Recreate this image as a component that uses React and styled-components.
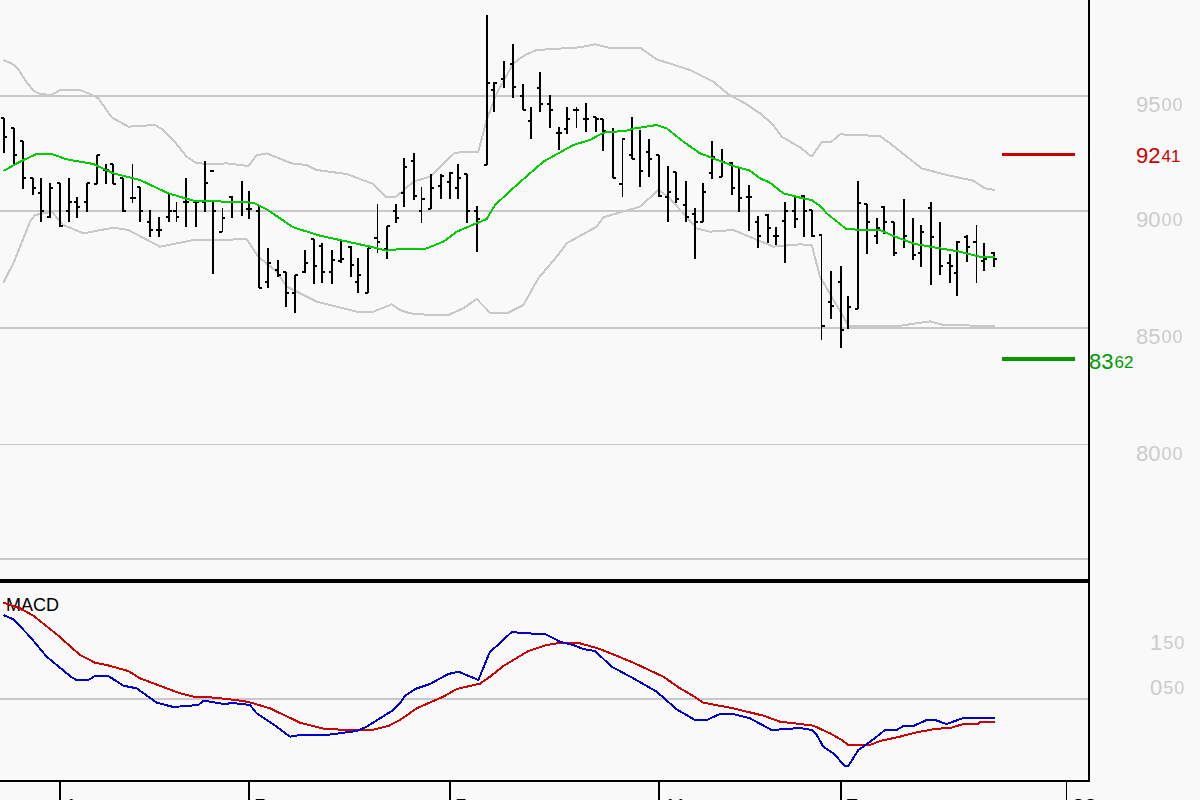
import React from "react";
import styled, { createGlobalStyle } from "styled-components";

// all chart data is in 1/3 px units, svg viewBox scales it down
const shift = (rows, dx, dy = 0) =>
  rows.map(([x, y, ...rest]) => [x + dx, y + dy, ...rest]);

const shiftBars = (rows, dx, dy = 0) =>
  rows.map(([x, hi, lo, op, cl, thin]) => [
    x + dx,
    hi + dy,
    lo + dy,
    op == null ? null : op + dy,
    cl == null ? null : cl + dy,
    thin,
  ]);

const bars = [
  ...shiftBars(
    [
      [12, 355, 458, 355, 412],
      [41, 385, 495, 385, 466],
      [68, 424, 566, 424, 535],
      [100, 535, 585, 535, 565],
      [122, 535, 665, 580, 633],
      [150, 550, 653, 650, 565],
      [180, 550, 680, 550, 677],
      [207, 535, 665, 633, 607],
      [232, 592, 653, 607, 620],
      [261, 550, 635, 607, 550],
      [290, 466, 553, 553, 466],
      [318, 492, 553, 510, 510],
      [340, 492, 553, 492, 553],
      [370, 535, 635, 535, 633],
      [398, 492, 610, 595, 595, true],
      [420, 562, 665, 562, 633],
      [450, 630, 710, 665, 690],
      [477, 650, 710, 690, 690],
      [506, 580, 665, 650, 633],
      [528, 607, 665, 633, 650, true],
      [558, 535, 680, 607, 607],
      [588, 607, 680, 607, 607],
      [615, 482, 635, 607, 550],
      [640, 605, 823, null, 633],
      [667, 625, 697, 695, 655, true],
      [695, 587, 653, 592, null],
      [726, 543, 647, null, 607],
      [747, 573, 658, 628, 628],
      [777, 615, 865, 633, 865],
      [804, 745, 865, 845, 788],
      [834, 780, 830, 810, 825],
      [858, 815, 922, 815, 878],
      [885, 825, 938, 878, 825],
      [915, 750, 818, 815, 788],
      [942, 718, 853, 718, 798],
      [966, 730, 848, 738, 815],
      [996, 750, 853, 815, 780],
      [1023, 722, 790, 783, 778],
      [1052, 738, 830, 740, 795],
      [1074, 775, 880, 845, 826],
      [1103, 745, 880, 878, 745],
      [1132, 612, 760, 715, 725, true],
      [1162, 677, 778, 748, 677],
      [1187, 612, 668, 632, 655],
    ],
    0
  ),
  ...shiftBars(
    [
      [12, 475, 622, 580, 500],
      [41, 460, 600, 482, 588],
      [65, 562, 668, 632, 598, true],
      [93, 523, 628, 628, 563],
      [122, 523, 596, 557, 527],
      [150, 517, 596, 545, 520],
      [174, 493, 598, 563, 535],
      [201, 523, 668, 523, 632],
      [231, 618, 755, 632, 657],
      [261, 45, 495, 495, 248],
      [283, 247, 335, 270, 248],
      [312, 183, 263, 237, null],
      [339, 132, 295, 192, 260],
      [369, 253, 331, 287, 329],
      [393, 322, 416, 363, null],
      [420, 217, 335, 265, 311],
      [450, 286, 383, 311, 329],
      [477, 380, 450, 398, 398],
      [500, 322, 402, 386, 356],
      [528, 322, 383, 330, 330, true],
      [558, 310, 395, 356, 356],
      [588, 350, 395, 352, 356],
      [609, 356, 452, 356, 392],
      [640, 385, 535, null, 535],
      [667, 418, 590, 551, 418, true],
      [696, 350, 478, 466, 478],
      [720, 390, 560, null, 512],
      [747, 418, 532, 455, 476],
      [777, 466, 590, 466, 588],
      [804, 498, 665, 590, 575],
      [828, 517, 610, 517, 598],
      [858, 544, 665, 615, 650],
      [885, 625, 778, 642, 665],
      [909, 550, 667, 667, 575],
      [936, 423, 536, 520, 472],
      [966, 447, 532, 530, 487],
      [996, 487, 585, 490, 563],
      [1018, 500, 635, null, 593],
      [1047, 556, 692, 592, 592],
      [1074, 648, 743, 665, 708],
      [1103, 643, 728, 645, 683],
      [1127, 680, 735, 707, 707],
      [1155, 607, 790, 662, 632],
      [1184, 590, 685, 632, 656],
    ],
    1200
  ),
  ...shiftBars(
    [
      [12, 285, 410, 287, 333],
      [36, 331, 410, 331, 408],
      [65, 406, 720, 406, 678, true],
      [93, 514, 656, 607, 617],
      [122, 498, 743, 545, 690],
      [144, 588, 686, null, 620],
      [174, 243, 628, 626, 308],
      [201, 313, 461, 313, 367],
      [231, 354, 431, 408, 385],
      [253, 318, 402, 320, 367],
      [283, 366, 467, 366, 460],
      [312, 297, 443, 417, 408],
      [339, 354, 480, null, 464],
      [363, 376, 500, 460, 395],
      [393, 307, 554, 325, 412],
      [420, 366, 524, null, 497],
      [450, 462, 548, 490, 497],
      [471, 423, 587, 520, 425],
      [500, 406, 485, 412, 440],
      [529, 375, 548, 425, null, true],
      [552, 430, 512, 482, 476],
      [582, 457, 500, 458, 476],
    ],
    2400,
    300
  ),
];

const upperBand = [
  ...[
    [10, 180], [35, 190], [55, 207], [75, 240], [100, 272], [120, 282], [155, 285],
    [180, 270], [240, 270], [270, 282], [295, 295], [335, 352], [385, 380], [465, 375],
    [490, 390], [520, 420], [560, 470], [590, 490], [650, 492], [680, 490], [745, 498],
    [770, 466], [800, 460], [875, 490], [920, 495], [950, 510], [1040, 522], [1120, 552],
    [1160, 592], [1185, 592],
  ],
  ...shift(
    [
      [0, 580], [40, 545], [90, 530], [125, 495], [165, 458], [235, 455], [260, 360],
      [290, 280], [340, 190], [375, 165], [410, 150], [540, 142], [585, 133], [625, 143],
      [720, 143], [770, 178], [870, 210], [940, 245], [985, 283], [1035, 310], [1080, 340],
      [1115, 370], [1145, 410],
    ],
    1200
  ),
  ...shift(
    [
      [0, 142], [35, 170], [65, 127], [95, 125], [120, 103], [240, 108], [270, 130],
      [320, 170], [365, 205], [440, 225], [520, 242], [555, 265], [585, 270],
    ],
    2400,
    300
  ),
];

const lowerBand = [
  ...[
    [10, 848], [40, 790], [90, 665], [105, 645], [155, 635], [190, 675], [250, 700],
    [340, 683], [385, 690], [480, 740], [580, 720], [740, 718], [775, 770], [830, 815],
    [860, 860], [950, 905], [1070, 935], [1120, 935], [1175, 913],
  ],
  ...shift(
    [
      [0, 930], [30, 940], [90, 945], [145, 945], [190, 925], [230, 897], [270, 938],
      [320, 940], [370, 915], [415, 835], [470, 770], [500, 730], [590, 680], [610, 652],
      [720, 620], [775, 570], [805, 590], [890, 685], [930, 695], [1000, 690], [1120, 740],
    ],
    1200
  ),
  ...shift(
    [
      [0, 433], [35, 435], [60, 530], [130, 650], [145, 678], [295, 678], [390, 664],
      [430, 675], [585, 678],
    ],
    2400,
    300
  ),
];

const average = [
  ...[
    [10, 513], [60, 485], [110, 462], [155, 462], [200, 478], [280, 492], [340, 520],
    [420, 540], [505, 580], [580, 602], [650, 604], [760, 608], [800, 628], [880, 682],
    [960, 707], [1120, 742],
  ],
  ...shift(
    [
      [-40, 752], [0, 747], [75, 747], [130, 725], [170, 695], [260, 657], [285, 615],
      [350, 555], [430, 485], [520, 435], [570, 420], [610, 398], [680, 392], [700, 386],
      [770, 375], [800, 385], [850, 425], [900, 460], [1000, 498], [1050, 512], [1080, 535],
      [1110, 548], [1150, 580],
    ],
    1200
  ),
  ...shift(
    [
      [0, 293], [35, 300], [60, 318], [80, 340], [140, 388], [240, 390], [280, 408],
      [345, 432], [420, 445], [480, 455], [540, 470], [585, 470],
    ],
    2400,
    300
  ),
];

const signal = [
  ...[
    [10, 98], [60, 115], [100, 137], [175, 197], [240, 255], [285, 278], [320, 285],
    [385, 303], [420, 325], [540, 370], [580, 380], [620, 381], [680, 387], [730, 393],
    [760, 400], [810, 415], [900, 458], [980, 478], [1115, 480], [1165, 468],
  ],
  ...shift(
    [
      [0, 450], [50, 415], [130, 380], [170, 357], [240, 341], [270, 320], [310, 288],
      [385, 243], [440, 225], [470, 220], [540, 220], [600, 237], [700, 278], [790, 320],
      [840, 355], [880, 378], [910, 398], [1000, 415], [1090, 437], [1140, 455],
    ],
    1200
  ),
  ...shift(
    [
      [0, 462], [40, 467], [90, 490], [125, 510], [145, 525], [210, 525], [240, 513],
      [300, 500], [345, 488], [405, 477], [455, 473], [490, 462], [535, 462], [540, 456],
      [585, 456],
    ],
    2400
  ),
];

const macd = [
  ...[
    [10, 135], [40, 148], [90, 200], [140, 260], [215, 322], [230, 330], [265, 330],
    [285, 318], [325, 318], [370, 347], [410, 355], [470, 398], [520, 411], [595, 405],
    [610, 392], [680, 403], [690, 398], [750, 405], [770, 430], [830, 470], [870, 500],
    [900, 495], [980, 495], [1070, 483], [1100, 470], [1180, 420],
  ],
  ...shift(
    [
      [0, 400], [15, 378], [45, 357], [90, 342], [145, 312], [175, 305], [235, 330],
      [270, 245], [290, 228], [335, 186], [380, 190], [435, 192], [480, 215], [520, 225],
      [550, 237], [585, 243], [635, 290], [700, 325], [770, 365], [830, 418], [885, 450],
      [920, 450], [960, 432], [1000, 432], [1050, 445], [1115, 480],
    ],
    1200
  ),
  ...shift(
    [
      [0, 474], [35, 480], [50, 495], [70, 530], [100, 550], [135, 588], [145, 588],
      [175, 540], [215, 512], [255, 480], [290, 480], [310, 468], [340, 468], [380, 450],
      [405, 450], [440, 462], [490, 444], [585, 444],
    ],
    2400
  ),
];

const toPoints = (rows) => rows.map((p) => p.join(",")).join(" ");

const priceGrid = [
  { y: 288, w: 6 },
  { y: 633, w: 6 },
  { y: 984, w: 6 },
  { y: 1332, w: 3 },
  { y: 1677, w: 6 },
];

const scaleTags = [
  { top: 94, left: 46, big: "95", small: "00" },
  { top: 209, left: 46, big: "90", small: "00" },
  { top: 326, left: 46, big: "85", small: "00" },
  { top: 443, left: 46, big: "80", small: "00" },
  { top: 145, left: 46, big: "92", small: "41", color: "#cc0000", tight: true },
  { top: 351, left: -1, big: "83", small: "62", color: "#009900", tight: true },
  { top: 632, left: 60, big: "1", small: "50" },
  { top: 677, left: 60, big: "0", small: "50" },
];

const timeTicks = [
  { x: 59, label: "1" },
  { x: 248, label: "5" },
  { x: 449, label: "5" },
  { x: 658, label: "11" },
  { x: 840, label: "7" },
  { x: 1066, label: "22", thin: true },
];

const GlobalStyle = createGlobalStyle`
  html, body {
    margin: 0;
    padding: 0;
    background: #f9f9f9;
  }
`;

const Page = styled.div`
  width: 1200px;
  height: 800px;
  background: #f9f9f9;
  font-family: "Liberation Sans", Arial, sans-serif;
  overflow: hidden;
`;

const ChartRow = styled.div`
  display: flex;
  height: 782px;
`;

const Plot = styled.div`
  width: 1088px;
  display: flex;
  flex-direction: column;
  border-right: 2px solid #000;
  border-bottom: 2px solid #000;
`;

const PricePane = styled.div`
  height: 579px;
  border-bottom: 4px solid #000;
`;

const MacdPane = styled.div`
  position: relative;
  flex: 1;
`;

const MacdTitle = styled.span`
  position: absolute;
  left: 6px;
  top: 13px;
  font-size: 18px;
  line-height: 18px;
  color: #000;
`;

const ChartSvg = styled.svg`
  position: relative;
  display: block;
  width: 100%;
  height: 100%;
  shape-rendering: crispEdges;
`;

const Trace = styled.polyline`
  fill: none;
  stroke: ${(p) => p.$color};
  stroke-width: ${(p) => p.$width};
  stroke-linejoin: bevel;
`;

const Rule = styled.line`
  stroke: ${(p) => p.$color || "#c8c8c8"};
  stroke-width: ${(p) => p.$width || 6};
`;

const Stem = styled.line`
  stroke: #000;
  stroke-width: ${(p) => (p.$thin ? 3 : 6)};
`;

const Scale = styled.div`
  position: relative;
  flex: 1;
`;

const ScaleTag = styled.span`
  position: absolute;
  top: ${(p) => p.$top}px;
  left: ${(p) => p.$left}px;
  font-size: 22px;
  line-height: 22px;
  white-space: nowrap;
  color: ${(p) => p.$color || "#cccccc"};
`;

const Cents = styled.span`
  font-size: ${(p) => (p.$tight ? 17 : 18)}px;
  letter-spacing: ${(p) => (p.$tight ? 0 : 1)}px;
  margin-left: 1px;
  position: relative;
  top: -1px;
`;

const TimeAxis = styled.div`
  position: relative;
  height: 18px;
  width: 1090px;
`;

const TimeTick = styled.div`
  position: absolute;
  top: 0;
  bottom: 0;
  left: ${(p) => p.$x}px;
  width: ${(p) => (p.$thin ? 1 : 2)}px;
  background: #000;
`;

const TimeLabel = styled.span`
  position: absolute;
  top: 14px;
  left: 6px;
  font-size: 22px;
  line-height: 22px;
  color: #000;
`;

const Bar = ({ x, hi, lo, op, cl, thin }) => (
  <>
    <Stem $thin={thin} x1={x} x2={x} y1={hi} y2={lo} />
    {op != null && <Stem x1={x - 9} x2={x} y1={op} y2={op} />}
    {cl != null && <Stem x1={x} x2={x + 9} y1={cl} y2={cl} />}
  </>
);

const App = () => {
  return (
    <Page>
      <GlobalStyle />
      <ChartRow>
        <Plot>
          <PricePane>
            <ChartSvg viewBox="0 0 3264 1737">
              {priceGrid.map((g) => (
                <Rule key={g.y} x1="0" x2="3264" y1={g.y} y2={g.y} $width={g.w} />
              ))}
              <Trace points={toPoints(upperBand)} $color="#c8c8c8" $width={6} />
              <Trace points={toPoints(lowerBand)} $color="#c8c8c8" $width={6} />
              {bars.map(([x, hi, lo, op, cl, thin]) => (
                <Bar key={x} x={x} hi={hi} lo={lo} op={op} cl={cl} thin={thin} />
              ))}
              <Stem x1="631" x2="642" y1="513" y2="513" />
              <Trace points={toPoints(average)} $color="#00cc00" $width={6} />
              <Rule x1="3006" x2="3225" y1="462" y2="462" $color="#cc0000" $width={9} />
              <Rule x1="3006" x2="3225" y1="1077" y2="1077" $color="#009900" $width={12} />
            </ChartSvg>
          </PricePane>
          <MacdPane>
            <MacdTitle>MACD</MacdTitle>
            <ChartSvg viewBox="0 39 3264 591">
              <Rule x1="0" x2="3264" y1="387" y2="387" />
              <Trace points={toPoints(signal)} $color="#cc0000" $width={6} />
              <Trace points={toPoints(macd)} $color="#0000cc" $width={6} />
            </ChartSvg>
          </MacdPane>
        </Plot>
        <Scale>
          {scaleTags.map((t) => (
            <ScaleTag key={t.top} $top={t.top} $left={t.left} $color={t.color}>
              {t.big}
              <Cents $tight={t.tight}>{t.small}</Cents>
            </ScaleTag>
          ))}
        </Scale>
      </ChartRow>
      <TimeAxis>
        {timeTicks.map((t) => (
          <TimeTick key={t.x} $x={t.x} $thin={t.thin}>
            <TimeLabel>{t.label}</TimeLabel>
          </TimeTick>
        ))}
      </TimeAxis>
    </Page>
  );
};

export default App;
